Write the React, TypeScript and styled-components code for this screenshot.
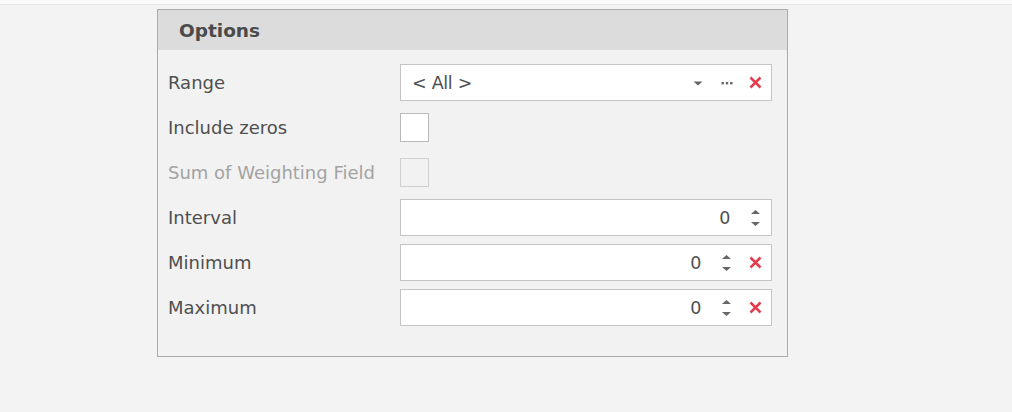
import React from "react";
import styled, { createGlobalStyle } from "styled-components";

const Global = createGlobalStyle`
  html, body { margin: 0; padding: 0; background: #f3f3f3; }
  body { font-family: "DejaVu Sans", sans-serif; }
`;

const TopStrip = styled.div`
  height: 4px;
  background: #fafafa;
  border-bottom: 1px solid #e6e6e6;
`;

const Page = styled.div`
  padding: 4px 0 0 157px;
`;

const Panel = styled.div`
  width: 629px;
  height: 346px;
  border: 1px solid #ababab;
  background: #f2f2f2;
  display: flex;
  flex-direction: column;
`;

const Header = styled.div`
  height: 40px;
  background: #dcdcdc;
  display: flex;
  align-items: center;
  padding-left: 21px;
  font-family: "DejaVu Sans", sans-serif;
  font-weight: bold;
  font-size: 18.5px;
  color: #4a4a4a;
`;

const Body = styled.div`
  padding: 10px 14px 0 10px;
  display: grid;
  grid-template-columns: 232px 372px;
  grid-auto-rows: 45px;
  align-items: center;
`;

const Label = styled.div<{ $disabled?: boolean }>`
  font-family: "DejaVu Sans", sans-serif;
  font-size: 18px;
  color: ${(p) => (p.$disabled ? "#a3a3a3" : "#4f4f4f")};
`;

const Field = styled.div`
  height: 35px;
  border: 1px solid #c4c4c4;
  background: #fff;
  display: flex;
  align-items: center;
  padding: 0 1px 0 11px;
  font-family: "DejaVu Sans", sans-serif;
  font-size: 17.5px;
  color: #4f4f4f;
  letter-spacing: -0.3px;
`;

const FieldText = styled.span`
  flex: 1;
`;

const Value = styled.span`
  flex: 1;
  text-align: right;
  padding-right: 11px;
`;

const IconSlot = styled.span`
  width: 29px;
  height: 20px;
  display: flex;
  align-items: center;
  justify-content: center;
`;

const Check = styled.div<{ $disabled?: boolean }>`
  width: 27px;
  height: 27px;
  border: 1px solid ${(p) => (p.$disabled ? "#cfcfcf" : "#b9b9b9")};
  background: ${(p) => (p.$disabled ? "#f2f2f2" : "#fff")};
`;

const DropIcon = () => (
  <svg width="10" height="6" viewBox="0 0 10 6">
    <path d="M0.5 1.5h9L5 5.5z" fill="#666" />
  </svg>
);

const DotsIcon = () => (
  <svg width="12" height="4" viewBox="0 0 12 4">
    <rect x="0.5" y="1" width="2.4" height="2.4" fill="#666" />
    <rect x="4.8" y="1" width="2.4" height="2.4" fill="#666" />
    <rect x="9.1" y="1" width="2.4" height="2.4" fill="#666" />
  </svg>
);

const ClearIcon = () => (
  <svg width="13" height="13" viewBox="0 0 13 13">
    <path d="M1.5 1.5L11.5 11.5M11.5 1.5L1.5 11.5" stroke="#e23d4f" strokeWidth="2.5" strokeLinecap="butt" />
  </svg>
);

const SpinIcon = () => (
  <svg width="11" height="20" viewBox="0 0 11 20">
    <path d="M1 6h9L5.5 2z" fill="#666" />
    <path d="M1 14h9L5.5 18z" fill="#666" />
  </svg>
);

export default function App() {
  return (
    <>
      <Global />
      <TopStrip />
      <Page>
        <Panel>
          <Header>Options</Header>
          <Body>
            <Label>Range</Label>
            <Field>
              <FieldText>&lt; All &gt;</FieldText>
              <IconSlot>
                <DropIcon />
              </IconSlot>
              <IconSlot>
                <DotsIcon />
              </IconSlot>
              <IconSlot>
                <ClearIcon />
              </IconSlot>
            </Field>

            <Label>Include zeros</Label>
            <Check />

            <Label $disabled>Sum of Weighting Field</Label>
            <Check $disabled />

            <Label>Interval</Label>
            <Field>
              <Value>0</Value>
              <IconSlot>
                <SpinIcon />
              </IconSlot>
            </Field>

            <Label>Minimum</Label>
            <Field>
              <Value>0</Value>
              <IconSlot>
                <SpinIcon />
              </IconSlot>
              <IconSlot>
                <ClearIcon />
              </IconSlot>
            </Field>

            <Label>Maximum</Label>
            <Field>
              <Value>0</Value>
              <IconSlot>
                <SpinIcon />
              </IconSlot>
              <IconSlot>
                <ClearIcon />
              </IconSlot>
            </Field>
          </Body>
        </Panel>
      </Page>
    </>
  );
}
